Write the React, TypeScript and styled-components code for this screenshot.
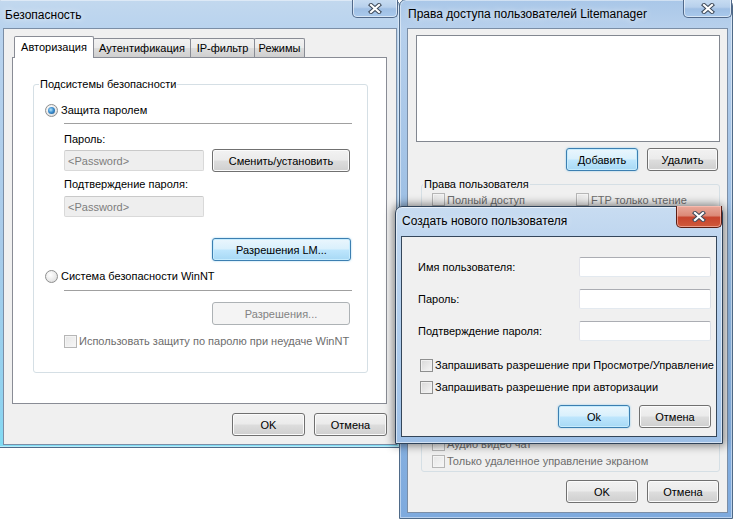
import React from "react";
import styled, { createGlobalStyle, css } from "styled-components";

const GlobalStyle = createGlobalStyle`
  html, body {
    margin: 0;
    padding: 0;
    background: #ffffff;
  }
  body {
    font-family: "Liberation Sans", "Segoe UI", Arial, sans-serif;
    font-size: 11px;
    color: #000;
  }
`;

const Desktop = styled.div`
  position: relative;
  width: 733px;
  height: 520px;
  overflow: hidden;
  background: #ffffff;
`;

type Tone = "blue" | "teal" | "active";

const frameBg: Record<Tone, string> = {
  teal: "linear-gradient(180deg, #c2d8ee 0px, #b9d3ee 28px, #a8cbea 55%, #8fd3f0 92%, #7fdcf4 100%)",
  blue: "linear-gradient(180deg, #a9c7e8 0px, #b7d0ec 28px, #8fb6e0 60%, #7eaade 100%)",
  active: "linear-gradient(180deg, #c8dcf1 0px, #bfd6ef 30px, #a9c8ea 70%, #9dbfe6 100%)",
};

const Frame = styled.div<{
  $x: number;
  $y: number;
  $w: number;
  $h: number;
  $pad: string;
  $tone: Tone;
}>`
  position: absolute;
  left: ${(p) => p.$x}px;
  top: ${(p) => p.$y}px;
  width: ${(p) => p.$w}px;
  height: ${(p) => p.$h}px;
  box-sizing: border-box;
  display: flex;
  flex-direction: column;
  padding: ${(p) => p.$pad};
  border: 1px solid ${(p) => (p.$tone === "active" ? "#2f4258" : "#4f6a88")};
  border-radius: 7px 7px 0 0;
  background: ${(p) => frameBg[p.$tone]};
  box-shadow: ${(p) =>
    p.$tone === "active"
      ? "0 0 9px 2px rgba(0,0,0,0.45), inset 0 0 0 1px rgba(255,255,255,0.55)"
      : "inset 0 0 0 1px rgba(255,255,255,0.45)"};
`;

const TitleBar = styled.div<{ $h: number; $indent: number }>`
  height: ${(p) => p.$h}px;
  flex: none;
  display: flex;
  align-items: flex-start;
  justify-content: space-between;
  padding-left: ${(p) => p.$indent}px;
`;

const TitleText = styled.span<{ $top: number }>`
  margin-top: ${(p) => p.$top}px;
  font-size: 12px;
  line-height: 16px;
  color: #000;
  white-space: nowrap;
  text-shadow: 0 0 6px rgba(255, 255, 255, 0.9);
`;

const CloseButton = styled.div<{ $red?: boolean; $w: number; $h: number; $shift: number }>`
  width: ${(p) => p.$w}px;
  height: ${(p) => p.$h}px;
  margin-top: -1px;
  margin-right: ${(p) => p.$shift}px;
  box-sizing: border-box;
  display: flex;
  align-items: center;
  justify-content: center;
  border: 1px solid ${(p) => (p.$red ? "#5a1e14" : "#51698a")};
  border-top: none;
  border-radius: 0 0 5px 5px;
  ${(p) =>
    p.$red
      ? css`
          background: linear-gradient(180deg, #e9a99b 0%, #dc8a78 45%, #c7442d 55%, #cf5a3b 100%);
          box-shadow: inset 0 0 0 1px rgba(255, 200, 190, 0.6);
        `
      : css`
          background: linear-gradient(180deg, #c9ddf2 0%, #b7d0ec 45%, #9fbfe4 55%, #a9c9ec 100%);
          box-shadow: inset 0 0 0 1px rgba(255, 255, 255, 0.55);
        `}
`;

const Client = styled.div<{ $active?: boolean; $pad: string }>`
  flex: 1;
  min-height: 0;
  box-sizing: border-box;
  display: flex;
  flex-direction: column;
  padding: ${(p) => p.$pad};
  background: #f0f0f0;
  border: 1px solid ${(p) => (p.$active ? "#34465a" : "#7b8ea6")};
`;

const CloseGlyph = () => (
  <svg width="14" height="11" viewBox="0 0 14 11">
    <path d="M3 2 L11 9 M11 2 L3 9" stroke="#3e4a5a" strokeWidth="4.2" strokeLinecap="square" />
    <path d="M3 2 L11 9 M11 2 L3 9" stroke="#ffffff" strokeWidth="2.2" strokeLinecap="square" />
  </svg>
);

/* ---------- controls ---------- */

type BtnKind = "normal" | "default" | "disabled";

const Button = styled.div<{ $kind?: BtnKind; $w: number }>`
  width: ${(p) => p.$w}px;
  height: 23px;
  box-sizing: border-box;
  display: flex;
  align-items: center;
  justify-content: center;
  border-radius: 3px;
  white-space: nowrap;
  ${(p) =>
    p.$kind === "default"
      ? css`
          border: 1px solid #3c7fb1;
          background: linear-gradient(180deg, #eaf6fd 0%, #d9f0fc 48%, #bee6fd 52%, #a7d9f5 100%);
          box-shadow: inset 0 0 0 1px #c6ecfe, 0 0 2px rgba(64, 170, 230, 0.6);
          color: #000;
        `
      : p.$kind === "disabled"
      ? css`
          border: 1px solid #adb2b5;
          background: #f4f4f4;
          color: #838383;
        `
      : css`
          border: 1px solid #707070;
          background: linear-gradient(180deg, #f2f2f2 0%, #ebebeb 48%, #dddddd 52%, #cfcfcf 100%);
          box-shadow: inset 0 0 0 1px #fbfbfb;
          color: #000;
        `}
`;

const ButtonRow = styled.div<{ $mt: number; $mr?: number }>`
  display: flex;
  justify-content: flex-end;
  gap: 9px;
  margin-top: ${(p) => p.$mt}px;
  margin-right: ${(p) => p.$mr ?? 0}px;
  flex: none;
`;

const TextInput = styled.div<{ $disabled?: boolean; $w: number; $h: number }>`
  width: ${(p) => p.$w}px;
  height: ${(p) => p.$h}px;
  box-sizing: border-box;
  display: flex;
  align-items: center;
  padding-left: 3px;
  border: 1px solid;
  border-radius: 2px;
  ${(p) =>
    p.$disabled
      ? css`
          border-color: #c9c9c9 #d9d9d9 #d9d9d9 #d9d9d9;
          background: #eeeeee;
          color: #7d7d7d;
        `
      : css`
          border-color: #abadb3 #dbdfe6 #e3e9ef #e2e3ea;
          background: #ffffff;
        `}
`;

const RadioCircle = styled.span<{ $checked?: boolean }>`
  width: 13px;
  height: 13px;
  box-sizing: border-box;
  border-radius: 50%;
  border: 1px solid #8e8f8f;
  background: radial-gradient(circle at 40% 35%, #ffffff 0%, #e8e8e8 60%, #cfcfcf 100%);
  display: flex;
  align-items: center;
  justify-content: center;
  flex: none;

  &::after {
    content: "";
    display: ${(p) => (p.$checked ? "block" : "none")};
    width: 7px;
    height: 7px;
    border-radius: 50%;
    background: radial-gradient(circle at 40% 40%, #b6e6fb 0%, #3d8fd0 45%, #174a7c 100%);
  }
`;

const CheckBox = styled.span<{ $disabled?: boolean }>`
  width: 13px;
  height: 13px;
  box-sizing: border-box;
  flex: none;
  border: 1px solid ${(p) => (p.$disabled ? "#b6b6b6" : "#8e8f8f")};
  background: ${(p) =>
    p.$disabled
      ? "linear-gradient(135deg, #e6e6e6, #f7f7f7)"
      : "linear-gradient(135deg, #d8d8d8, #f6f6f6)"};
  box-shadow: inset 0 0 0 1px ${(p) => (p.$disabled ? "#f4f4f4" : "#f0f0f0")};
`;

const OptionRow = styled.div<{ $gap: number; $disabled?: boolean; $mt?: number; $pl?: number }>`
  display: flex;
  align-items: center;
  gap: ${(p) => p.$gap}px;
  height: 16px;
  margin-top: ${(p) => p.$mt ?? 0}px;
  padding-left: ${(p) => p.$pl ?? 0}px;
  white-space: nowrap;
  color: ${(p) => (p.$disabled ? "#6d6d6d" : "#000")};
`;

const Separator = styled.div<{ $mt: number }>`
  height: 1px;
  background: #a0a0a0;
  margin-top: ${(p) => p.$mt}px;
`;

const Label = styled.div<{ $mt?: number }>`
  height: 16px;
  line-height: 16px;
  margin-top: ${(p) => p.$mt ?? 0}px;
  white-space: nowrap;
`;

const GroupBox = styled.fieldset<{ $pad: string; $grow?: boolean; $mt?: number; $ml?: number }>`
  margin: ${(p) => p.$mt ?? 0}px 0 0 ${(p) => p.$ml ?? 0}px;
  min-width: 0;
  padding: ${(p) => p.$pad};
  border: 1px solid #d5dfe5;
  border-radius: 3px;
  display: flex;
  flex-direction: column;
  ${(p) => p.$grow && "flex: 1;"}
`;

const Legend = styled.legend<{ $ml: number }>`
  margin-left: ${(p) => p.$ml}px;
  padding: 0 1px;
  line-height: 14px;
  height: 14px;
`;

/* ---------- window 1: Безопасность ---------- */

const TabStrip = styled.div`
  display: flex;
  align-items: flex-end;
  height: 21px;
  padding-left: 2px;
  flex: none;
  position: relative;
  z-index: 1;
`;

const Tab = styled.div<{ $selected?: boolean; $w: number }>`
  width: ${(p) => p.$w}px;
  box-sizing: border-box;
  margin-left: -1px;
  display: flex;
  align-items: center;
  justify-content: center;
  white-space: nowrap;
  border: 1px solid #898c95;
  border-radius: 2px 2px 0 0;
  ${(p) =>
    p.$selected
      ? css`
          height: 22px;
          margin-bottom: -1px;
          margin-left: 0;
          border-bottom: none;
          background: #ffffff;
          position: relative;
          z-index: 2;
          padding-bottom: 2px;
        `
      : css`
          height: 19px;
          border-bottom: none;
          background: linear-gradient(180deg, #f2f2f2 0%, #ebebeb 48%, #dddddd 52%, #cfcfcf 100%);
        `}
`;

const TabPage = styled.div`
  height: 347px;
  box-sizing: border-box;
  border: 1px solid #898c95;
  background: #ffffff;
  padding: 19px 18px 0 20px;
  flex: none;
`;

const Indented = styled.div`
  margin-left: 30px;
  margin-right: 15px;
  display: flex;
  flex-direction: column;
`;

const FieldGrid = styled.div<{ $mt: number }>`
  display: grid;
  grid-template-columns: 140px 138px;
  column-gap: 8px;
  align-items: center;
  margin-top: ${(p) => p.$mt}px;
`;

const RightCell = styled.div`
  grid-column: 2;
`;

const SecurityWindow = () => (
  <Frame $x={-6} $y={-1} $w={406} $h={449} $pad="0 2px 2px 8px" $tone="teal">
    <TitleBar $h={28} $indent={2}>
      <TitleText $top={7}>Безопасность</TitleText>
      <CloseButton $w={46} $h={19} $shift={-1}>
        <CloseGlyph />
      </CloseButton>
    </TitleBar>
    <Client $pad="7px 9px 8px 8px">
      <TabStrip>
        <Tab $selected $w={80}>Авторизация</Tab>
        <Tab $w={98}>Аутентификация</Tab>
        <Tab $w={65}>IP-фильтр</Tab>
        <Tab $w={51}>Режимы</Tab>
      </TabStrip>
      <TabPage>
        <GroupBox $pad="11px 0 23px 0">
          <Legend $ml={5}>Подсистемы безопасности</Legend>
          <OptionRow $gap={3} $pl={11}>
            <RadioCircle $checked />
            Защита паролем
          </OptionRow>
          <Indented>
            <Separator $mt={5} />
            <Label $mt={7}>Пароль:</Label>
            <FieldGrid $mt={2}>
              <TextInput $disabled $w={140} $h={21}>&lt;Password&gt;</TextInput>
              <Button $w={138}>Сменить/установить</Button>
            </FieldGrid>
            <Label $mt={4}>Подтверждение пароля:</Label>
            <FieldGrid $mt={4}>
              <TextInput $disabled $w={140} $h={21}>&lt;Password&gt;</TextInput>
            </FieldGrid>
            <FieldGrid $mt={21}>
              <RightCell>
                <Button $kind="default" $w={139}>Разрешения LM...</Button>
              </RightCell>
            </FieldGrid>
          </Indented>
          <OptionRow $gap={3} $mt={7} $pl={11}>
            <RadioCircle />
            Система безопасности WinNT
          </OptionRow>
          <Indented>
            <Separator $mt={6} />
            <FieldGrid $mt={11}>
              <RightCell>
                <Button $kind="disabled" $w={138}>Разрешения...</Button>
              </RightCell>
            </FieldGrid>
            <OptionRow $gap={2} $disabled $mt={8}>
              <CheckBox $disabled />
              Использовать защиту по паролю при неудаче WinNT
            </OptionRow>
          </Indented>
        </GroupBox>
      </TabPage>
      <ButtonRow $mt={9}>
        <Button $w={73}>OK</Button>
        <Button $w={73}>Отмена</Button>
      </ButtonRow>
    </Client>
  </Frame>
);

/* ---------- window 2: Права доступа ---------- */

const ListBox = styled.div`
  height: 107px;
  box-sizing: border-box;
  border: 1px solid #828790;
  background: #ffffff;
  flex: none;
`;

const RightsGrid = styled.div`
  display: grid;
  grid-template-columns: 144px 1fr;
  grid-auto-rows: 17px;
  align-items: center;
  padding-left: 10px;
`;

const RightsBottom = styled.div`
  margin-top: auto;
  padding-left: 10px;
  display: flex;
  flex-direction: column;
  gap: 1px;
`;

const AccessWindow = () => (
  <Frame $x={399} $y={-1} $w={334} $h={520} $pad="0 4px 5px 7px" $tone="blue">
    <TitleBar $h={28} $indent={1}>
      <TitleText $top={6}>Права доступа пользователей Litemanager</TitleText>
      <CloseButton $w={49} $h={19} $shift={-4}>
        <CloseGlyph />
      </CloseButton>
    </TitleBar>
    <Client $pad="6px 7px 9px 8px">
      <ListBox />
      <ButtonRow $mt={6} $mr={2}>
        <Button $kind="default" $w={72}>Добавить</Button>
        <Button $w={71}>Удалить</Button>
      </ButtonRow>
      <GroupBox $pad="0 0 2px 0" $grow $mt={6} $ml={5}>
        <Legend $ml={1}>Права пользователя</Legend>
        <RightsGrid>
          <OptionRow $gap={2} $disabled>
            <CheckBox $disabled />
            Полный доступ
          </OptionRow>
          <OptionRow $gap={2} $disabled>
            <CheckBox $disabled />
            FTP только чтение
          </OptionRow>
        </RightsGrid>
        <RightsBottom>
          <OptionRow $gap={2} $disabled>
            <CheckBox $disabled />
            Аудио видео чат
          </OptionRow>
          <OptionRow $gap={2} $disabled>
            <CheckBox $disabled />
            Только удаленное управление экраном
          </OptionRow>
        </RightsBottom>
      </GroupBox>
      <ButtonRow $mt={8} $mr={1}>
        <Button $w={72}>OK</Button>
        <Button $w={72}>Отмена</Button>
      </ButtonRow>
    </Client>
  </Frame>
);

/* ---------- window 3: Создать нового пользователя ---------- */

const FormRow = styled.div<{ $mt: number }>`
  display: flex;
  align-items: center;
  justify-content: space-between;
  margin-top: ${(p) => p.$mt}px;
`;

const NewUserDialog = () => (
  <Frame $x={395} $y={206} $w={328} $h={238} $pad="0 5px 6px 5px" $tone="active">
    <TitleBar $h={29} $indent={1}>
      <TitleText $top={6}>Создать нового пользователя</TitleText>
      <CloseButton $red $w={46} $h={22} $shift={-5}>
        <CloseGlyph />
      </CloseButton>
    </TitleBar>
    <Client $active $pad="20px 5px 8px 16px">
      <FormRow $mt={0}>
        <Label>Имя пользователя:</Label>
        <TextInput $w={132} $h={20} />
      </FormRow>
      <FormRow $mt={12}>
        <Label>Пароль:</Label>
        <TextInput $w={132} $h={20} />
      </FormRow>
      <FormRow $mt={12}>
        <Label>Подтверждение пароля:</Label>
        <TextInput $w={132} $h={20} />
      </FormRow>
      <OptionRow $gap={2} $mt={16} $pl={2}>
        <CheckBox />
        Запрашивать разрешение при Просмотре/Управление
      </OptionRow>
      <OptionRow $gap={2} $mt={6} $pl={2}>
        <CheckBox />
        Запрашивать разрешение при авторизации
      </OptionRow>
      <ButtonRow $mt={10}>
        <Button $kind="default" $w={72}>Ok</Button>
        <Button $w={72}>Отмена</Button>
      </ButtonRow>
    </Client>
  </Frame>
);

export default function App() {
  return (
    <>
      <GlobalStyle />
      <Desktop>
        <SecurityWindow />
        <AccessWindow />
        <NewUserDialog />
      </Desktop>
    </>
  );
}
